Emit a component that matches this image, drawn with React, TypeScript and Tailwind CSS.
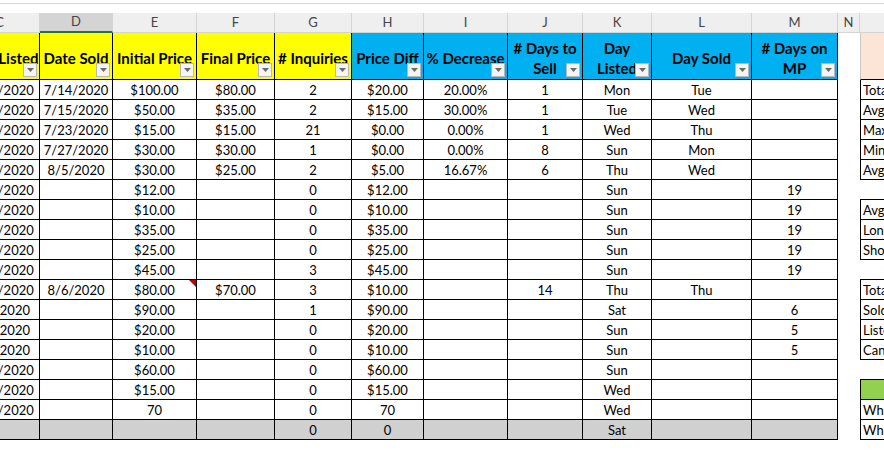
import React from "react";

const widths = [
  "w-[80px]",
  "w-[73px]",
  "w-[84px]",
  "w-[78px]",
  "w-[77px]",
  "w-[72px]",
  "w-[84px]",
  "w-[75px]",
  "w-[69px]",
  "w-[100px]",
  "w-[86px]",
];
const letters = ["C", "D", "E", "F", "G", "H", "I", "J", "K", "L", "M"];

const headers: string[][] = [
  ["Date Listed"],
  ["Date Sold"],
  ["Initial Price"],
  ["Final Price"],
  ["# Inquiries"],
  ["Price Diff"],
  ["% Decrease"],
  ["# Days to", "Sell"],
  ["Day", "Listed"],
  ["Day Sold"],
  ["# Days on", "MP"],
];

type Row = {
  c: string[];
  o: string;
  box: boolean;
  under?: boolean;
  green?: boolean;
  gray?: boolean;
  note?: boolean;
};

const rows: Row[] = [
  { c: ["7/13/2020", "7/14/2020", "$100.00", "$80.00", "2", "$20.00", "20.00%", "1", "Mon", "Tue", ""], o: "Total Listings", box: true },
  { c: ["7/14/2020", "7/15/2020", "$50.00", "$35.00", "2", "$15.00", "30.00%", "1", "Tue", "Wed", ""], o: "Avg Price Diff", box: true },
  { c: ["7/22/2020", "7/23/2020", "$15.00", "$15.00", "21", "$0.00", "0.00%", "1", "Wed", "Thu", ""], o: "Max Days to Sell", box: true },
  { c: ["7/19/2020", "7/27/2020", "$30.00", "$30.00", "1", "$0.00", "0.00%", "8", "Sun", "Mon", ""], o: "Min Days to Sell", box: true },
  { c: ["7/30/2020", "8/5/2020", "$30.00", "$25.00", "2", "$5.00", "16.67%", "6", "Thu", "Wed", ""], o: "Avg Days to Sell", box: true },
  { c: ["7/19/2020", "", "$12.00", "", "0", "$12.00", "", "", "Sun", "", "19"], o: "", box: false, under: true },
  { c: ["7/19/2020", "", "$10.00", "", "0", "$10.00", "", "", "Sun", "", "19"], o: "Avg Days on MP", box: true },
  { c: ["7/19/2020", "", "$35.00", "", "0", "$35.00", "", "", "Sun", "", "19"], o: "Longest on MP", box: true },
  { c: ["7/19/2020", "", "$25.00", "", "0", "$25.00", "", "", "Sun", "", "19"], o: "Shortest on MP", box: true },
  { c: ["7/19/2020", "", "$45.00", "", "3", "$45.00", "", "", "Sun", "", "19"], o: "", box: false, under: true },
  { c: ["7/23/2020", "8/6/2020", "$80.00", "$70.00", "3", "$10.00", "", "14", "Thu", "Thu", ""], o: "Total Items", box: true, note: true },
  { c: ["8/1/2020", "", "$90.00", "", "1", "$90.00", "", "", "Sat", "", "6"], o: "Sold", box: true },
  { c: ["8/2/2020", "", "$20.00", "", "0", "$20.00", "", "", "Sun", "", "5"], o: "Listed", box: true },
  { c: ["8/2/2020", "", "$10.00", "", "0", "$10.00", "", "", "Sun", "", "5"], o: "Canceled", box: true },
  { c: ["7/26/2020", "", "$60.00", "", "0", "$60.00", "", "", "Sun", "", ""], o: "", box: false, under: true },
  { c: ["7/29/2020", "", "$15.00", "", "0", "$15.00", "", "", "Wed", "", ""], o: "", box: true, green: true },
  { c: ["7/29/2020", "", "70", "", "0", "70", "", "", "Wed", "", ""], o: "What sold best?", box: true },
  { c: ["", "", "", "", "0", "0", "", "", "Sat", "", ""], o: "What sold least?", box: true, gray: true },
];

function Drop() {
  return (
    <span className="absolute right-[2px] bottom-[2px] w-[14px] h-[14px] bg-[#f4f4f4] border border-[#b8b8b8] flex items-center justify-center">
      <svg width="7" height="4" viewBox="0 0 7 4">
        <path d="M0 0H7L3.5 4Z" fill="#6b6b6b" />
      </svg>
    </span>
  );
}

export default function App() {
  return (
    <div className="w-[884px] h-[464px] overflow-hidden bg-white text-black" style={{ fontFamily: "Lato, 'Liberation Sans', sans-serif" }}>
      <div className="h-[3px]" />
      <div className="h-[1px] bg-[#d6d6d6]" />
      <div className="h-[9px]" />
      <div className="-ml-[40px] w-[1100px]">
        {/* column letters */}
        <div className="flex h-[20px] bg-[#efefef] text-[13px] text-[#444]">
          {letters.map((l, i) => (
            <div
              key={l}
              className={`${widths[i]} shrink-0 h-full flex items-center justify-center border-r border-[#d4d4d4] ${
                i === 1 ? "bg-[#d4d4d4] border-b-2 border-b-[#217346]" : "border-b border-b-[#d4d4d4]"
              }`}
            >
              {l}
            </div>
          ))}
          <div className="w-[22px] shrink-0 h-full flex items-center justify-center border-r border-b border-[#d4d4d4]">N</div>
          <div className="w-[200px] shrink-0 h-full border-b border-[#d4d4d4]" />
        </div>
        {/* header row */}
        <div className="flex h-[47px] text-[15px] font-bold leading-[20px]">
          {headers.map((h, i) => (
            <div
              key={i}
              className={`${widths[i]} shrink-0 h-full relative border-r border-b border-black flex flex-col items-center justify-center pt-[3px] whitespace-nowrap ${
                i < 5 ? "bg-[#ffff00]" : "bg-[#00b0f0]"
              } ${i === 0 ? "pl-[2px]" : ""}`}
            >
              {h.map((t) => (
                <span key={t}>{t}</span>
              ))}
              <Drop />
            </div>
          ))}
          <div className="w-[22px] shrink-0 h-full bg-white" />
          <div className="w-[200px] shrink-0 h-full bg-[#fce4d6] border-l border-l-[#c8c8c8] border-b border-b-black" />
        </div>
        {/* data rows */}
        {rows.map((r, ri) => (
          <div key={ri} className="flex h-[20px] text-[13px]">
            {r.c.map((t, ci) => (
              <div
                key={ci}
                className={`${widths[ci]} shrink-0 h-full relative border-r border-b border-black flex items-center justify-center pt-[3px] whitespace-nowrap ${
                  r.gray ? "bg-[#d0d0d0]" : ""
                } ${ci === 0 ? "pl-[4px]" : ""}`}
              >
                {t}
                {r.note && ci === 2 ? (
                  <span className="absolute right-0 top-0 w-0 h-0 border-t-[7px] border-t-[#c00000] border-l-[7px] border-l-transparent" />
                ) : null}
              </div>
            ))}
            <div className="w-[22px] shrink-0 h-full" />
            <div
              className={`w-[200px] shrink-0 h-full flex items-center pl-[2px] pt-[3px] whitespace-nowrap text-[13px] ${
                r.box ? "border-l border-b border-black" : r.under ? "border-b border-black" : ""
              } ${r.green ? "bg-[#92d050]" : ""}`}
            >
              {r.o}
            </div>
          </div>
        ))}
      </div>
    </div>
  );
}
